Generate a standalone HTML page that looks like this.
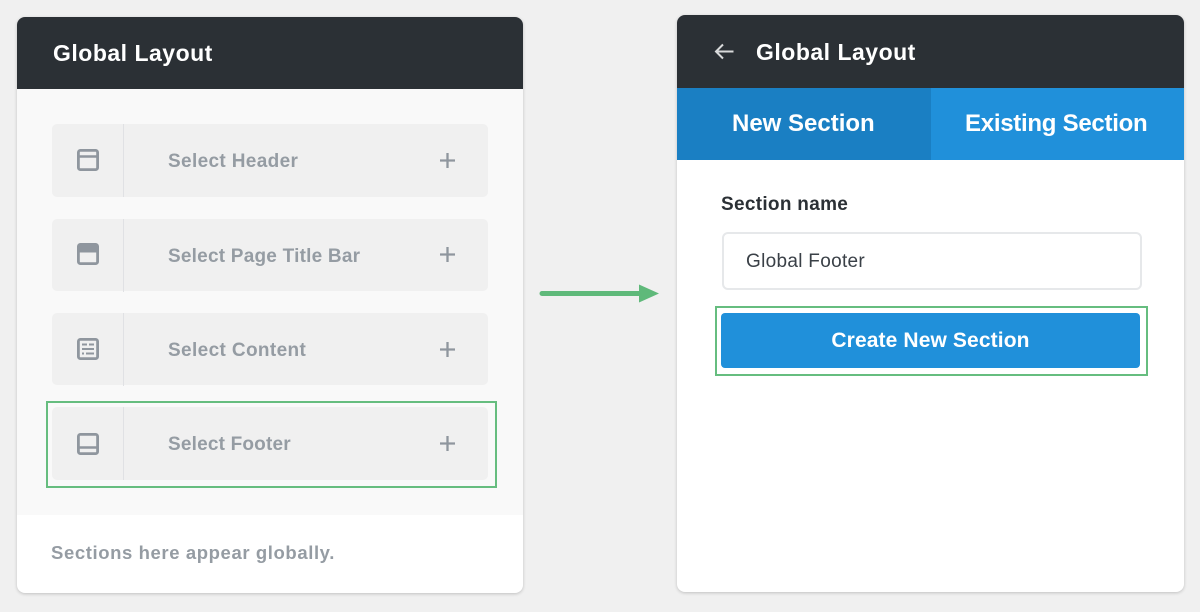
<!DOCTYPE html>
<html><head><meta charset="utf-8"><style>
*{box-sizing:border-box;margin:0;padding:0}
html,body{width:1200px;height:612px;overflow:hidden;background:#f0f0f0;font-family:"Liberation Sans","Noto Sans CJK JP",sans-serif}
.a{position:absolute;white-space:nowrap}
.card{position:absolute;background:#fff;border-radius:8px;box-shadow:0 1px 3px rgba(0,0,0,.2);overflow:hidden}
.head{position:absolute;left:0;top:0;background:#2b3035}
.t{color:#fff;font-weight:700;font-size:23px;line-height:30px}
.row{position:absolute;left:52px;width:436px;height:73px;background:#f0f0f0;border-radius:5px}
.row i{position:absolute;left:71px;top:0;width:1px;height:73px;background:#e0e1e4}
.row b{position:absolute;left:116px;top:24.5px;font-size:19px;line-height:25px;color:#959ca3;white-space:nowrap}
.row svg{position:absolute}
.g{position:absolute;border:2px solid #66bd7f}
</style></head><body>
<div class="card" style="left:17px;top:17px;width:506px;height:576px">
<div class="a" style="left:0;top:72px;width:506px;height:426px;background:#f9f9f9"></div>
<div class="head" style="width:506px;height:72px"></div>
</div>
<div class="a t" style="left:53px;top:38px;letter-spacing:.5px">Global Layout</div>

<div class="row" style="top:124px"><i></i><svg style="left:24.5px;top:25px" width="22" height="22" viewBox="0 0 22 22" fill="none" stroke="#8f969e" stroke-width="2.8"><rect x="1.4" y="1.4" width="19.2" height="19.2" rx="2"/><path d="M1 7.5H21" stroke-width="2.4"/></svg><b style="letter-spacing:.35px">Select Header</b><svg style="left:388px;top:29px" width="15" height="15" viewBox="0 0 15 15" stroke="#8f969e" stroke-width="2.3"><path d="M7.5 0V15M0 7.5H15"/></svg></div>

<div class="row" style="top:219px;height:72px"><i></i><svg style="left:24.5px;top:24px" width="22" height="22" viewBox="0 0 22 22" fill="none" stroke="#8f969e" stroke-width="2.8"><rect x="1.4" y="1.4" width="19.2" height="19.2" rx="2"/><path d="M1 5.5H21" stroke-width="8"/></svg><b style="letter-spacing:.22px">Select Page Title Bar</b><svg style="left:388px;top:28px" width="15" height="15" viewBox="0 0 15 15" stroke="#8f969e" stroke-width="2.3"><path d="M7.5 0V15M0 7.5H15"/></svg></div>

<div class="row" style="top:313px;height:72px"><i></i><svg style="left:24.5px;top:25px" width="22" height="22" viewBox="0 0 22 22" fill="none" stroke="#8f969e" stroke-width="2.8"><rect x="1.4" y="1.4" width="19.2" height="19.2" rx="2"/><path d="M5 6.5H10M12 6.5H17M5 11H17M5 15.5H7M9 15.5H17" stroke-width="2"/></svg><b style="letter-spacing:.37px">Select Content</b><svg style="left:388px;top:29px" width="15" height="15" viewBox="0 0 15 15" stroke="#8f969e" stroke-width="2.3"><path d="M7.5 0V15M0 7.5H15"/></svg></div>

<div class="row" style="top:407px"><i></i><svg style="left:24.5px;top:26px" width="22" height="22" viewBox="0 0 22 22" fill="none" stroke="#8f969e" stroke-width="2.8"><rect x="1.4" y="1.4" width="19.2" height="19.2" rx="2"/><path d="M1 14.5H21" stroke-width="2.4"/></svg><b style="letter-spacing:.19px">Select Footer</b><svg style="left:388px;top:29px" width="15" height="15" viewBox="0 0 15 15" stroke="#8f969e" stroke-width="2.3"><path d="M7.5 0V15M0 7.5H15"/></svg></div>

<div class="g" style="left:46px;top:401px;width:451px;height:87px"></div>
<div class="a" style="left:51px;top:540px;font-size:18.5px;line-height:25px;font-weight:700;color:#959ca3;letter-spacing:.6px">Sections here appear globally.</div>

<svg class="a" style="left:539px;top:283px" width="120" height="21" viewBox="0 0 120 21"><path d="M3 10.5H102" stroke="#5fb97a" stroke-width="5" stroke-linecap="round"/><path d="M100 1.5L120 10.5L100 19.5Z" fill="#5fb97a"/></svg>

<div class="card" style="left:677px;top:15px;width:507px;height:577px">
<div class="head" style="width:507px;height:73px"></div>
<div class="a" style="left:0;top:73px;width:254px;height:72px;background:#1a7fc3"></div>
<div class="a" style="left:254px;top:73px;width:253px;height:72px;background:#2090da"></div>
</div>
<svg class="a" style="left:714px;top:43px" width="20" height="17" viewBox="0 0 20 17" fill="none" stroke="#d9dadb" stroke-width="2"><path d="M19.5 8.5H2M9 1.5L2 8.5L9 15.5"/></svg>
<div class="a t" style="left:756px;top:37px;letter-spacing:.5px">Global Layout</div>
<div class="a" style="left:732px;top:108px;font-size:24px;line-height:32px;font-weight:700;color:#fff">New Section</div>
<div class="a" style="left:965px;top:108px;font-size:24px;line-height:32px;font-weight:700;color:#fff;letter-spacing:-.27px">Existing Section</div>
<div class="a" style="left:721px;top:192px;font-size:19px;line-height:25px;font-weight:700;color:#2b3035;letter-spacing:.3px">Section name</div>
<div class="a" style="left:722px;top:232px;width:420px;height:58px;background:#fff;border:2px solid #e6e8ea;border-radius:6px"></div>
<div class="a" style="left:746px;top:249px;font-size:19px;line-height:26px;color:#3a4047;letter-spacing:.3px">Global Footer</div>
<div class="g" style="left:715px;top:306px;width:433px;height:70px"></div>
<div class="a" style="left:721px;top:313px;width:419px;height:55px;background:#2090da;border-radius:4px"></div>
<div class="a" style="left:721px;top:327px;width:419px;text-align:center;font-size:21px;line-height:28px;font-weight:700;color:#fff;letter-spacing:.12px">Create New Section</div>
</body></html>
